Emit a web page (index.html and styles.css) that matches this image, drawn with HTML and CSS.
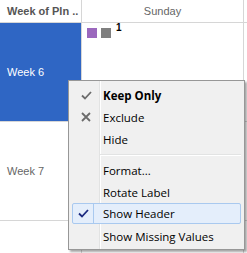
FILE: index.html
```html
<!DOCTYPE html>
<html>
<head>
<meta charset="utf-8">
<link rel="stylesheet" href="styles.css">
</head>
<body>
<div class="grid">
  <div class="row header">
    <div class="c1 hdr1">Week of Pln ..</div>
    <div class="c2 hdr2">Sunday</div>
    <div class="c3"></div>
  </div>
  <div class="row body">
    <div class="c1 sel">Week 6</div>
    <div class="c2 marks">
      <span class="sq purple"></span><span class="sq gray"></span><span class="num">1</span>
    </div>
    <div class="c3"></div>
  </div>
  <div class="row body">
    <div class="c1 lbl">Week 7</div>
    <div class="c2"></div>
    <div class="c3"></div>
  </div>
  <div class="row tail">
    <div class="c1"></div>
    <div class="c2"></div>
    <div class="c3"></div>
  </div>
</div>

<div class="menu">
  <div class="item"><span class="ic"><svg width="11" height="9" viewBox="0 0 11 9"><path d="M1 4.5 L4 7.5 L10 1" fill="none" stroke="#6b6b6b" stroke-width="1.8"/></svg></span><span class="tx bold">Keep Only</span></div>
  <div class="item"><span class="ic"><svg width="10" height="10" viewBox="0 0 10 10"><path d="M1 1 L9 9 M9 1 L1 9" fill="none" stroke="#6b6b6b" stroke-width="1.8"/></svg></span><span class="tx">Exclude</span></div>
  <div class="item"><span class="ic"></span><span class="tx">Hide</span></div>
  <div class="sep"></div>
  <div class="item"><span class="ic"></span><span class="tx">Format...</span></div>
  <div class="item"><span class="ic"></span><span class="tx">Rotate Label</span></div>
  <div class="item hl"><span class="ic chk"><svg width="11" height="9" viewBox="0 0 11 9"><path d="M1 4.5 L4 7.5 L10 1" fill="none" stroke="#1b2a80" stroke-width="1.8"/></svg></span><span class="tx">Show Header</span></div>
  <div class="item"><span class="ic"></span><span class="tx">Show Missing Values</span></div>
</div>
</body>
</html>
```
FILE: styles.css
```css
html, body {
  margin: 0;
  padding: 0;
  background: #ffffff;
}
body {
  width: 247px;
  height: 253px;
  overflow: hidden;
  position: relative;
  font-family: "Liberation Sans", Arial, sans-serif;
}
.grid {
  display: flex;
  flex-direction: column;
}
.row {
  display: flex;
  border-bottom: 1px solid #d6d6d6;
}
.header { height: 22px; }
.body { height: 98px; }
.tail { height: 40px; border-bottom: none; }
.c1 {
  width: 81px;
  border-right: 1px solid #d6d6d6;
  box-sizing: border-box;
  width: 82px;
  display: flex;
  align-items: center;
  padding-left: 7px;
  font-size: 11px;
}
.c2 {
  width: 162px;
  box-sizing: border-box;
  border-right: 1px solid #d6d6d6;
}
.c3 { flex: 1; }
.hdr1 {
  font-weight: bold;
  color: #555555;
  white-space: nowrap;
  overflow: hidden;
}
.hdr2 {
  display: flex;
  align-items: center;
  justify-content: center;
  font-size: 11px;
  color: #666666;
}
.sel {
  background: #2f66c4;
  color: #ffffff;
}
.lbl { color: #666666; }
.marks {
  display: flex;
  align-items: flex-start;
  padding: 5px 0 0 5px;
  gap: 4px;
}
.sq {
  width: 10px;
  height: 10px;
  display: block;
}
.purple { background: #9b68bd; }
.gray { background: #7f7f7f; }
.num {
  font-size: 10px;
  font-weight: bold;
  color: #000;
  line-height: 8px;
  margin-left: 1px;
  margin-top: -4px;
}
.menu {
  position: absolute;
  left: 68px;
  top: 80px;
  width: 177px;
  height: 170px;
  box-sizing: border-box;
  border: 1px solid #979797;
  background: #f0f0f0;
  box-shadow: 2px 2px 2px rgba(0,0,0,0.35);
  padding: 3px 3px 0 3px;
  font-family: "Open Sans", "Noto Sans", sans-serif;
  font-size: 11.5px;
  color: #000;
  background-image: linear-gradient(to right, transparent 30px, #e2e3e3 30px, #e2e3e3 31px, #ffffff 31px, #ffffff 32px, transparent 32px);
}
.item {
  height: 22px;
  display: flex;
  align-items: center;
  box-sizing: border-box;
}
.ic {
  width: 27px;
  height: 100%;
  display: flex;
  align-items: center;
  justify-content: center;
  box-sizing: border-box;
  padding-left: 1px;
}
.tx {
  padding-left: 4px;
  white-space: nowrap;
}
.bold { font-weight: bold; }
.sep {
  height: 9px;
  margin-left: 28px;
  margin-right: 0;
  background: linear-gradient(to bottom, transparent 4px, #e2e3e3 4px, #e2e3e3 5px, #ffffff 5px, #ffffff 6px, transparent 6px);
}
.hl {
  height: 21px;
  margin-bottom: 1px;
  border: 1px solid #a9c9ef;
  border-radius: 2px;
  background: #e4eefb;
}
.hl .ic {
  width: 21px;
  border-right: 1px solid #a9c9ef;
  padding-left: 0;
}
.hl .tx { padding-left: 9px; }
```
